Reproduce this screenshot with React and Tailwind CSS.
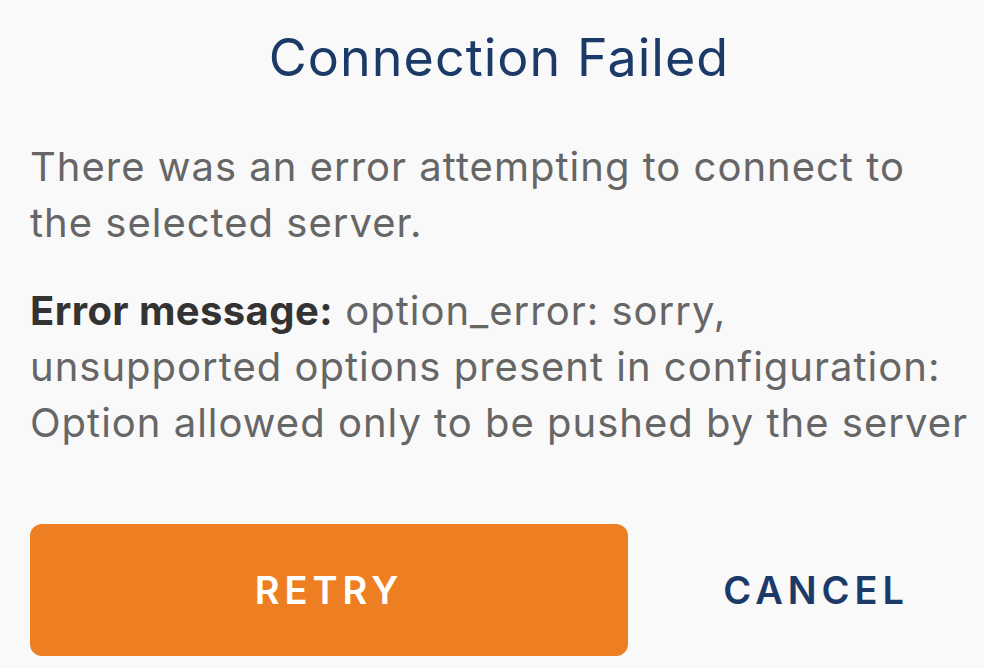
export default function App() {
  return (
    <div
      className="min-h-screen bg-[#f9f9f9] pl-[30px] pr-[8px] pt-[27px]"
      style={{ fontFamily: 'Inter, "Noto Sans", sans-serif' }}
    >
      <h1 className="pr-[8px] text-center text-[52px] leading-[62px] font-normal tracking-[0.02em] text-[#1b3a67]">
        Connection Failed
      </h1>

      <p className="mt-[50px] text-[40px] leading-[56px] tracking-[0.025em] text-[#666666]">
        There was an error attempting to connect to the selected server.
      </p>

      <p className="mt-[32px] text-[40px] leading-[56px] tracking-[0.025em] text-[#666666]">
        <span className="font-bold tracking-[0.01em] text-[#333333]">Error message:</span> option_error: sorry,
        unsupported options present in configuration: Option allowed only to be pushed by the server
      </p>

      <div className="mt-[73px] flex items-center gap-5">
        <button className="h-[132px] w-[598px] rounded-[12px] bg-[#ed7f22] text-[38px] font-semibold tracking-[0.13em] text-white">
          RETRY
        </button>
        <button className="-mr-[8px] h-[132px] flex-1 text-[38px] font-semibold tracking-[0.13em] text-[#1b3a67]">
          CANCEL
        </button>
      </div>
    </div>
  );
}
